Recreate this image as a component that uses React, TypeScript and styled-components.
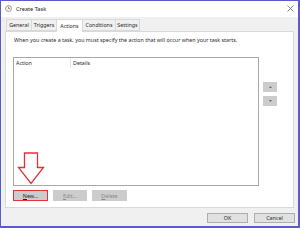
import React from "react";
import styled, { createGlobalStyle } from "styled-components";

const Global = createGlobalStyle`
  html, body { margin: 0; padding: 0; background: #ffffff; }
  body { width: 300px; height: 228px; overflow: hidden; }
  * { box-sizing: border-box; }
`;

const Window = styled.div`
  width: 300px;
  height: 228px;
  display: flex;
  flex-direction: column;
  border-style: solid;
  border-color: #5a5acb;
  border-width: 1px 2px 2px 1px;
  font-family: "Noto Sans", "Open Sans", sans-serif;
  font-size: 5.35px;
  color: #2a2a2a;
  background: #f0f0f0;
`;

const TitleBar = styled.div`
  height: 16px;
  flex: none;
  display: flex;
  align-items: center;
  gap: 4px;
  padding: 0 4px 1px 4px;
  background: #ffffff;
`;

const TitleText = styled.span`
  flex: 1;
  font-size: 5.6px;
  color: #1a1a1a;
`;

const Body = styled.div`
  flex: 1;
  display: flex;
  flex-direction: column;
  padding: 2px 3px 3px 4px;
  min-height: 0;
`;

const TabStrip = styled.div`
  height: 12px;
  flex: none;
  display: flex;
  align-items: flex-end;
  padding-left: 1px;
`;

const Tab = styled.div<{ $active?: boolean; $w: number }>`
  width: ${(p) => p.$w}px;
  height: ${(p) => (p.$active ? 13 : 12)}px;
  display: flex;
  align-items: center;
  justify-content: center;
  border: 1px solid #d9d9d9;
  border-bottom: ${(p) => (p.$active ? "none" : "1px solid #d9d9d9")};
  margin-left: -1px;
  background: ${(p) => (p.$active ? "#ffffff" : "#f0f0f0")};
  position: relative;
  z-index: ${(p) => (p.$active ? 1 : 0)};
  margin-bottom: ${(p) => (p.$active ? "-1px" : "0")};
  &:first-child { margin-left: 0; }
`;

const Panel = styled.div`
  height: 177px;
  flex: none;
  margin-right: 1px;
  background: #ffffff;
  border: 1px solid #d9d9d9;
  display: flex;
  flex-direction: column;
  padding: 4px 7px 0 7px;
`;

const Description = styled.div`
  line-height: 8px;
  padding-left: 1px;
`;

const ContentRow = styled.div`
  margin-top: 13px;
  display: flex;
  gap: 4px;
`;

const ListBox = styled.div`
  position: relative;
  width: 246px;
  height: 129px;
  border: 1px solid #a9a9a9;
  background: #ffffff;
`;

const ListHeader = styled.div`
  height: 10px;
  display: flex;
  align-items: center;
`;

const HeaderCell = styled.div<{ $w?: number }>`
  width: ${(p) => (p.$w ? `${p.$w}px` : "auto")};
  height: 100%;
  display: flex;
  align-items: center;
  padding-left: 2px;
  border-right: ${(p) => (p.$w ? "1px solid #e5e5e5" : "none")};
`;

const SideButtons = styled.div`
  padding-top: 25px;
  display: flex;
  flex-direction: column;
  gap: 4px;
`;

const SmallButton = styled.div`
  width: 14px;
  height: 10px;
  background: #cccccc;
  display: flex;
  align-items: center;
  justify-content: center;
`;

const ButtonRow = styled.div`
  margin-top: 4px;
  display: flex;
  gap: 5px;
`;

const ActionButton = styled.div<{ $w: number; $disabled?: boolean; $highlight?: boolean }>`
  width: ${(p) => p.$w}px;
  height: 11px;
  display: flex;
  align-items: center;
  justify-content: center;
  background: #cccccc;
  color: ${(p) => (p.$disabled ? "#8a8a8a" : "#1e1e1e")};
  border: ${(p) => (p.$highlight ? "1.5px solid #e5303a" : "1px solid #cccccc")};
`;

const Footer = styled.div`
  flex: none;
  display: flex;
  justify-content: flex-end;
  gap: 6px;
  padding-top: 5px;
`;

const DialogButton = styled.div`
  width: 41px;
  height: 10px;
  display: flex;
  align-items: center;
  justify-content: center;
  background: #e1e1e1;
  border: 1px solid #adadad;
`;

const ArrowMark = styled.svg`
  position: absolute;
  left: 3px;
  top: 94px;
`;

const Underline = styled.span`
  text-decoration: underline;
`;

const TaskIcon = () => (
  <svg width="7" height="7" viewBox="0 0 7 7">
    <circle cx="3.5" cy="3.5" r="3" fill="#f3efe2" stroke="#8c8c8c" strokeWidth="0.8" />
    <path d="M3.5 1.7 V3.6 H5" fill="none" stroke="#555" strokeWidth="0.6" />
  </svg>
);

const CloseIcon = () => (
  <svg width="7" height="7" viewBox="0 0 7 7">
    <path d="M0.5 0.5 L6.5 6.5 M6.5 0.5 L0.5 6.5" stroke="#555" strokeWidth="0.7" />
  </svg>
);

const Tri = ({ up }: { up?: boolean }) => (
  <svg width="3" height="2" viewBox="0 0 3 2">
    <path d={up ? "M0 2 L1.5 0 L3 2 Z" : "M0 0 L3 0 L1.5 2 Z"} fill="#6a6a6a" />
  </svg>
);

export default function App() {
  return (
    <>
      <Global />
      <Window>
        <TitleBar>
          <TaskIcon />
          <TitleText>Create Task</TitleText>
          <CloseIcon />
        </TitleBar>
        <Body>
          <TabStrip>
            <Tab $w={26}>General</Tab>
            <Tab $w={26}>Triggers</Tab>
            <Tab $w={27} $active>Actions</Tab>
            <Tab $w={34}>Conditions</Tab>
            <Tab $w={25}>Settings</Tab>
          </TabStrip>
          <Panel>
            <Description>
              When you create a task, you must specify the action that will occur when your task starts.
            </Description>
            <ContentRow>
              <ListBox>
                <ListHeader>
                  <HeaderCell $w={57}>Action</HeaderCell>
                  <HeaderCell>Details</HeaderCell>
                </ListHeader>
                <ArrowMark width="28" height="33" viewBox="0 0 28 33">
                  <path
                    d="M7.5 1 H20.5 V15.5 H26.5 L14 31.5 L1.5 15.5 H7.5 Z"
                    fill="#ffffff"
                    stroke="#e5303a"
                    strokeWidth="1.3"
                    strokeLinejoin="miter"
                  />
                </ArrowMark>
              </ListBox>
              <SideButtons>
                <SmallButton><Tri up /></SmallButton>
                <SmallButton><Tri /></SmallButton>
              </SideButtons>
            </ContentRow>
            <ButtonRow>
              <ActionButton $w={35} $highlight><Underline>N</Underline>ew...</ActionButton>
              <ActionButton $w={34} $disabled><Underline>E</Underline>dit...</ActionButton>
              <ActionButton $w={35} $disabled><Underline>D</Underline>elete</ActionButton>
            </ButtonRow>
          </Panel>
          <Footer>
            <DialogButton>OK</DialogButton>
            <DialogButton>Cancel</DialogButton>
          </Footer>
        </Body>
      </Window>
    </>
  );
}
